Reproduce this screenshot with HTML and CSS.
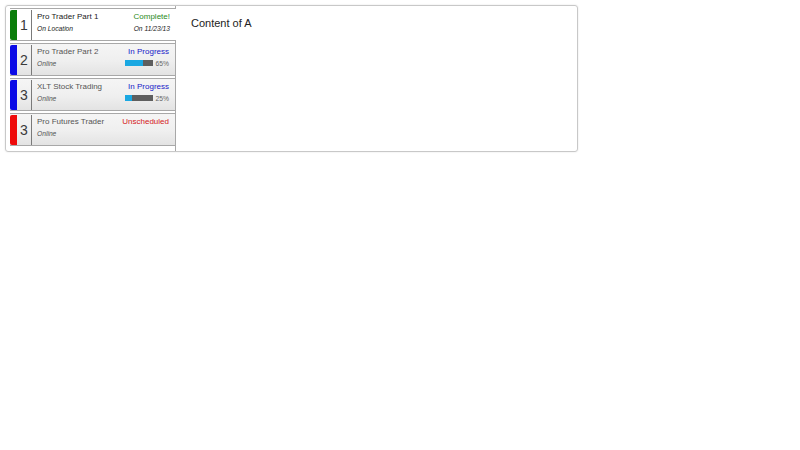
FILE: index.html
```html
<!DOCTYPE html>
<html>
<head>
<meta charset="utf-8">
<link rel="stylesheet" href="styles.css">
</head>
<body>
<div class="frame">
  <ul class="tabs">
    <li class="tab active">
      <span class="flag green"></span>
      <span class="num">1</span>
      <div class="info">
        <div class="row"><span class="title">Pro Trader Part 1</span><span class="status done">Complete!</span></div>
        <div class="row"><span class="sub">On Location</span><span class="date">On 11/23/13</span></div>
      </div>
    </li>
    <li class="tab">
      <span class="flag blue"></span>
      <span class="num">2</span>
      <div class="info">
        <div class="row"><span class="title">Pro Trader Part 2</span><span class="status prog">In Progress</span></div>
        <div class="row"><span class="sub">Online</span><span class="meter"><span class="track"><span class="fill" style="width:65%"></span></span><span class="pct">65%</span></span></div>
      </div>
    </li>
    <li class="tab">
      <span class="flag blue"></span>
      <span class="num">3</span>
      <div class="info">
        <div class="row"><span class="title">XLT Stock Trading</span><span class="status prog">In Progress</span></div>
        <div class="row"><span class="sub">Online</span><span class="meter"><span class="track"><span class="fill" style="width:25%"></span></span><span class="pct">25%</span></span></div>
      </div>
    </li>
    <li class="tab">
      <span class="flag red"></span>
      <span class="num">3</span>
      <div class="info">
        <div class="row"><span class="title">Pro Futures Trader</span><span class="status unsched">Unscheduled</span></div>
        <div class="row"><span class="sub">Online</span></div>
      </div>
    </li>
  </ul>
  <div class="panel">Content of A</div>
</div>
</body>
</html>
```

FILE: styles.css
```css
html, body {
  margin: 0;
  padding: 0;
  background: #fff;
  font-family: "Liberation Sans", Arial, sans-serif;
}

.frame {
  margin: 5px;
  width: 571px;
  height: 145px;
  border: 1px solid #c8c8c8;
  border-radius: 3px;
  box-shadow: 0 0 2px rgba(0, 0, 0, 0.12);
  display: flex;
  overflow: hidden;
}

.tabs {
  list-style: none;
  margin: 0;
  padding: 2px 0 0 4px;
  width: 166px;
  flex: none;
  display: flex;
  flex-direction: column;
  gap: 2px;
  position: relative;
  z-index: 1;
}

.tab {
  display: flex;
  height: 33px;
  box-sizing: border-box;
  padding-top: 1px;
  border-top: 1px solid #a8a8a8;
  border-bottom: 1px solid #a8a8a8;
  border-right: 1px solid #a8a8a8;
  background: linear-gradient(#f5f5f5, #efefef 55%, #e3e3e3);
  color: #555;
}

.tab.active {
  background: #fff;
  border-right: 0;
  color: #222;
}

.flag {
  width: 7px;
  height: 30px;
  flex: none;
  border-radius: 2px 0 0 2px;
}
.flag.green { background: #0a7d0a; }
.flag.blue { background: #0a0ae6; }
.flag.red { background: #ee0a0a; }

.num {
  width: 14px;
  height: 30px;
  flex: none;
  border-right: 1px solid #7a7a7a;
  font-size: 14px;
  line-height: 30px;
  text-align: center;
  color: #3a3a3a;
}

.info {
  flex: 1;
  padding: 0 6px 0 5px;
  display: flex;
  flex-direction: column;
}

.row {
  display: flex;
  justify-content: space-between;
  align-items: center;
  height: 12px;
}

.title {
  font-size: 8px;
}

.status {
  font-size: 8px;
}
.status.done { color: #2a8a22; }
.status.prog { color: #2020c8; }
.status.unsched { color: #d42020; }

.sub, .date {
  font-size: 6.7px;
  font-style: italic;
}
.date { color: #222; }

.meter {
  display: flex;
  align-items: center;
  gap: 3px;
}

.track {
  display: block;
  width: 28px;
  height: 6px;
  background: #5e5e5e;
}

.fill {
  display: block;
  height: 100%;
  background: #1aa8e2;
}

.pct {
  font-size: 6.7px;
  color: #666;
}

.panel {
  flex: 1;
  margin-left: -1px;
  border-left: 1px solid #a8a8a8;
  padding: 11px 15px;
  font-size: 11px;
  color: #222;
}
```
